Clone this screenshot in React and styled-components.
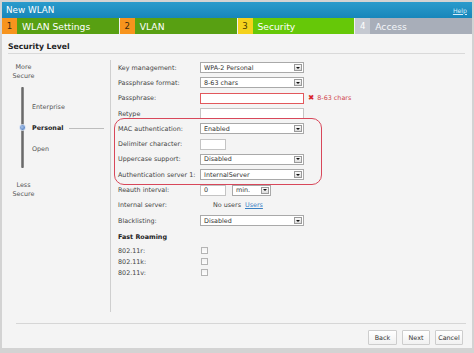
import React from 'react';
import styled, { createGlobalStyle } from 'styled-components';

const Global = createGlobalStyle`
  html, body { margin: 0; padding: 0; background: #d3d3d3; }
  body { width: 474px; height: 353px; overflow: hidden; font-family: "DejaVu Sans", Verdana, sans-serif; }
  * { box-sizing: border-box; }
`;

const Window = styled.div`
  margin: 2px 0 0 2px;
  width: 470px;
  height: 346px;
  background: #f4f4f4;
  display: flex;
  flex-direction: column;
`;

const TitleBar = styled.div`
  height: 16px;
  background: linear-gradient(#2a9bcc, #1786ba);
  display: flex;
  align-items: center;
  justify-content: space-between;
  padding: 0 5px 0 4px;
`;

const Title = styled.span`
  color: #fff;
  font-size: 8.8px;
  line-height: 1;
`;

const Help = styled.a`
  color: #d6eefb;
  font-size: 6.2px;
  text-decoration: underline;
`;

const Tabs = styled.div`
  display: grid;
  grid-template-columns: repeat(4, 1fr);
  gap: 1px;
  height: 16px;
  background: #f0f0f0;
`;

const tabColors = {
  done: { num: '#f7941d', numText: '#3a2a10', bg: '#58a012', text: '#fff' },
  active: { num: '#f4d21c', numText: '#4a3a00', bg: '#66c808', text: '#fff' },
  todo: { num: '#c5c9d1', numText: '#fff', bg: '#a8aeb9', text: '#f4f6fa' },
};

const Tab = styled.div`
  display: flex;
  height: 16px;
`;

const TabNum = styled.span`
  width: 15px;
  background: ${(p) => tabColors[p.$state].num};
  color: ${(p) => tabColors[p.$state].numText};
  font-size: 8.6px;
  display: flex;
  align-items: center;
  justify-content: center;
`;

const TabLabel = styled.span`
  flex: 1;
  background: ${(p) => tabColors[p.$state].bg};
  color: ${(p) => tabColors[p.$state].text};
  font-size: 9.2px;
  display: flex;
  align-items: center;
  padding-left: 5px;
`;

const SectionHeader = styled.div`
  margin: 0 7px 0 6px;
  padding: 8px 0 1px;
  line-height: 10px;
  font-size: 7.7px;
  font-weight: bold;
  color: #222;
  border-bottom: 1px solid #d9d9d9;
`;

const Main = styled.div`
  margin-top: 6px;
  height: 252px;
  display: flex;
`;

const LeftPanel = styled.div`
  width: 109px;
  border-right: 1px solid #cfcfcf;
  display: flex;
  flex-direction: column;
  padding-top: 3px;
  font-size: 6.4px;
  color: #555;
`;

const SecureText = styled.div`
  width: 41px;
  margin-left: 1px;
  text-align: center;
  line-height: 9px;
  margin-top: ${(p) => p.$top || 0}px;
`;

const SliderRow = styled.div`
  position: relative;
  display: flex;
  margin-top: 6px;
  height: 81px;
`;

const Track = styled.div`
  margin-left: 19px;
  width: 3px;
  height: 81px;
  background: linear-gradient(90deg, #9a9a9a, #6a6a6a 50%, #9a9a9a);
  border-radius: 1px;
`;

const Knob = styled.div`
  position: absolute;
  left: 17px;
  top: 37px;
  width: 7px;
  height: 7px;
  border-radius: 50%;
  background: radial-gradient(circle at 40% 40%, #a9c4ea, #3f6fb8);
  border: 1px solid #d6e2f4;
`;

const Levels = styled.div`
  margin-left: 8px;
  padding-top: 9.5px;
  display: flex;
  flex-direction: column;
  flex: 1;
`;

const Level = styled.div`
  height: 21px;
  display: flex;
  align-items: center;
  color: ${(p) => (p.$active ? '#222' : '#555')};
  font-weight: ${(p) => (p.$active ? 'bold' : 'normal')};
`;

const LevelLine = styled.span`
  margin-left: 6px;
  width: 35px;
  height: 1px;
  background: #bdbdbd;
`;

const Form = styled.div`
  position: relative;
  flex: 1;
  padding: 0 0 0 7px;
  font-size: 6.4px;
  color: #444;
`;

const Row = styled.div`
  display: grid;
  grid-template-columns: 82px 1fr;
  align-items: center;
  height: ${(p) => p.$h || 15.3}px;
`;

const Label = styled.span`
  white-space: nowrap;
  font-weight: ${(p) => (p.$bold ? 'bold' : 'normal')};
  color: ${(p) => (p.$bold ? '#222' : '#444')};
`;

const Controls = styled.div`
  display: flex;
  align-items: center;
`;

const SelectBox = styled.div`
  width: ${(p) => p.$w || 104}px;
  height: 11px;
  background: #fff;
  border: 1px solid #a9a9a9;
  display: flex;
  align-items: center;
  justify-content: space-between;
  padding: 0 1px 0 3px;
  color: #333;
  margin-left: ${(p) => p.$ml || 0}px;
`;

const Arrow = styled.span`
  width: 8px;
  height: 7px;
  border: 1px solid #9a9a9a;
  background: linear-gradient(#fafafa, #dcdcdc);
  display: flex;
  align-items: center;
  justify-content: center;
  &::after {
    content: '';
    border-left: 2px solid transparent;
    border-right: 2px solid transparent;
    border-top: 2px solid #111;
  }
`;

const TextInput = styled.div`
  width: ${(p) => p.$w || 104}px;
  height: 11px;
  background: #fff;
  border: 1px solid ${(p) => (p.$error ? '#e2585c' : '#c4c4c4')};
  padding: 0 3px;
  display: flex;
  align-items: center;
  color: #333;
`;

const ErrorMark = styled.span`
  margin-left: 4px;
  color: #d9262c;
  font-size: 7.5px;
  font-weight: bold;
  line-height: 1;
`;

const ErrorText = styled.span`
  margin-left: 3px;
  color: #d0454d;
`;

const Plain = styled.span`
  margin-left: 13px;
  color: #444;
`;

const Link = styled.a`
  margin-left: 4px;
  color: #3a80c4;
  text-decoration: underline;
`;

const Check = styled.span`
  margin-left: 1px;
  width: 7px;
  height: 7px;
  border: 1px solid #b4b4b4;
  background: linear-gradient(#f2f2f2, #fdfdfd);
`;

const Highlight = styled.div`
  position: absolute;
  left: 3px;
  top: 58px;
  width: 208px;
  height: 67px;
  border: 1.4px solid #d8475a;
  border-radius: 10px;
  pointer-events: none;
`;

const Footer = styled.div`
  margin: 11px 6px 0 14px;
  border-top: 1px solid #d6d6d6;
  padding: 6px 3px 0 0;
  display: flex;
  justify-content: flex-end;
  gap: 5px;
`;

const Button = styled.button`
  width: ${(p) => p.$w || 28}px;
  height: 15px;
  padding: 0;
  font-family: "DejaVu Sans", Verdana, sans-serif;
  font-size: 6.4px;
  color: #333;
  background: linear-gradient(#ffffff, #f1f1f1);
  border: 1px solid #cdcdcd;
  border-radius: 1px;
`;

const Select = ({ value, w, ml }) => (
  <SelectBox $w={w} $ml={ml}>
    <span>{value}</span>
    <Arrow />
  </SelectBox>
);

export default function App() {
  return (
    <>
      <Global />
      <Window>
        <TitleBar>
          <Title>New WLAN</Title>
          <Help>Help</Help>
        </TitleBar>
        <Tabs>
          <Tab><TabNum $state="done">1</TabNum><TabLabel $state="done">WLAN Settings</TabLabel></Tab>
          <Tab><TabNum $state="done">2</TabNum><TabLabel $state="done">VLAN</TabLabel></Tab>
          <Tab><TabNum $state="active">3</TabNum><TabLabel $state="active">Security</TabLabel></Tab>
          <Tab><TabNum $state="todo">4</TabNum><TabLabel $state="todo">Access</TabLabel></Tab>
        </Tabs>
        <SectionHeader>Security Level</SectionHeader>
        <Main>
          <LeftPanel>
            <SecureText>More<br />Secure</SecureText>
            <SliderRow>
              <Track />
              <Knob />
              <Levels>
                <Level>Enterprise</Level>
                <Level $active>Personal<LevelLine /></Level>
                <Level>Open</Level>
              </Levels>
            </SliderRow>
            <SecureText $top={12.5}>Less<br />Secure</SecureText>
          </LeftPanel>
          <Form>
            <Row><Label>Key management:</Label><Controls><Select value="WPA-2 Personal" /></Controls></Row>
            <Row><Label>Passphrase format:</Label><Controls><Select value="8-63 chars" /></Controls></Row>
            <Row><Label>Passphrase:</Label><Controls><TextInput $error /><ErrorMark>✖</ErrorMark><ErrorText>8-63 chars</ErrorText></Controls></Row>
            <Row><Label>Retype</Label><Controls><TextInput /></Controls></Row>
            <Row><Label>MAC authentication:</Label><Controls><Select value="Enabled" /></Controls></Row>
            <Row><Label>Delimiter character:</Label><Controls><TextInput $w={26} /></Controls></Row>
            <Row><Label>Uppercase support:</Label><Controls><Select value="Disabled" /></Controls></Row>
            <Row><Label>Authentication server 1:</Label><Controls><Select value="InternalServer" /></Controls></Row>
            <Row><Label>Reauth interval:</Label><Controls><TextInput $w={26}>0</TextInput><Select value="min." w={39} ml={6} /></Controls></Row>
            <Row><Label>Internal server:</Label><Controls><Plain>No users</Plain><Link>Users</Link></Controls></Row>
            <Row><Label>Blacklisting:</Label><Controls><Select value="Disabled" /></Controls></Row>
            <Row $h={17}><Label $bold>Fast Roaming</Label></Row>
            <Row $h={11}><Label>802.11r:</Label><Controls><Check /></Controls></Row>
            <Row $h={11}><Label>802.11k:</Label><Controls><Check /></Controls></Row>
            <Row $h={11}><Label>802.11v:</Label><Controls><Check /></Controls></Row>
            <Highlight />
          </Form>
        </Main>
        <Footer>
          <Button $w={29}>Back</Button>
          <Button>Next</Button>
          <Button>Cancel</Button>
        </Footer>
      </Window>
    </>
  );
}
